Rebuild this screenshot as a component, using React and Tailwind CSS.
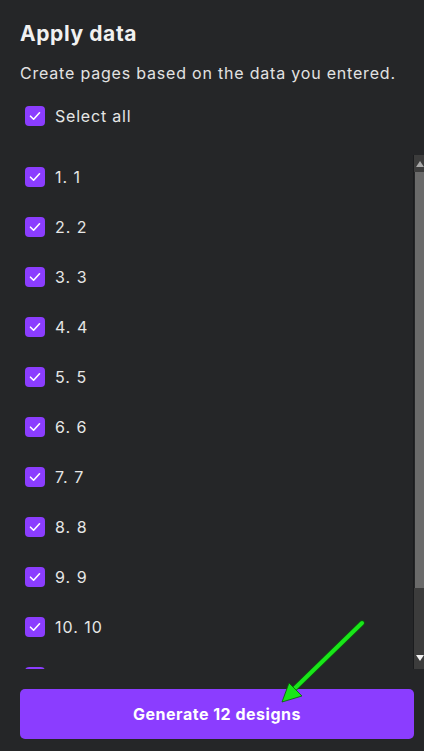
import React from "react";

const Check = () => (
  <div className="w-[20px] h-[20px] rounded-[4px] bg-[#8b3dff] flex items-center justify-center shrink-0">
    <svg width="14" height="14" viewBox="0 0 14 14" fill="none">
      <path d="M2.5 7.2 L5.6 10.2 L11.5 3.8" stroke="white" strokeWidth="1.6" strokeLinecap="round" strokeLinejoin="round" />
    </svg>
  </div>
);

const items = Array.from({ length: 11 }, (_, i) => `${i + 1}. ${i + 1}`);

export default function App() {
  return (
    <div
      className="relative w-[424px] h-[751px] overflow-hidden bg-[#252628] text-[#ececec] flex flex-col"
      style={{ fontFamily: "Inter, 'Noto Sans', sans-serif" }}
    >
      <div className="px-[20px] pt-[20px]">
        <h1 className="text-[21px] leading-[28px] font-bold text-[#f1f1f1] tracking-[0.6px]">Apply data</h1>
        <p className="mt-[13px] text-[16px] leading-[24px] text-[#e2e2e2] tracking-[0.8px] whitespace-nowrap">
          Create pages based on the data you entered.
        </p>
        <div className="mt-[21px] pl-[5px] flex items-center gap-[10px] h-[20px]">
          <Check />
          <span className="text-[16px] leading-[20px] text-[#e6e6e6] tracking-[0.8px]">Select all</span>
        </div>
      </div>

      <div className="mt-[29px] h-[514px] flex pl-[20px]">
        <div className="flex-1 overflow-hidden pl-[5px]">
          {items.map((t) => (
            <div key={t} className="h-[50px] pt-[12px] flex items-start gap-[10px]">
              <Check />
              <span className="text-[16px] leading-[20px] text-[#e6e6e6] tracking-[1px]">{t}</span>
            </div>
          ))}
        </div>
        <div className="w-[11px] flex flex-col border-l border-[#1b1c1e]">
          <div className="h-[17px] bg-[#3c3c3c] flex items-center justify-end">
            <svg width="8" height="6" viewBox="0 0 8 6">
              <path d="M4 0 L8 6 L0 6 Z" fill="#a8a8a8" />
            </svg>
          </div>
          <div className="h-[416px] bg-[#6a6a6a] ml-[1px]" />
          <div className="flex-1 bg-[#3c3c3c] flex flex-col justify-end pb-[8px] items-end">
            <svg width="8" height="6" viewBox="0 0 8 6">
              <path d="M0 0 L8 0 L4 6 Z" fill="#f2f2f2" />
            </svg>
          </div>
        </div>
      </div>

      <div className="px-[20px] mt-[20px]">
        <button className="w-[394px] h-[50px] rounded-[5px] bg-[#8b3dff] text-white text-[16px] font-bold tracking-[0.5px] flex items-center justify-center">
          Generate 12 designs
        </button>
      </div>

      <svg className="absolute left-0 top-0 pointer-events-none" width="424" height="751">
        <line x1="362" y1="623" x2="292" y2="691" stroke="#0a5a0a" strokeWidth="5.5" strokeLinecap="round" />
        <line x1="362" y1="623" x2="292" y2="691" stroke="#19e619" strokeWidth="4" strokeLinecap="round" />
        <path d="M282 702 L289 683 L302 696 Z" fill="#19e619" stroke="#0a5a0a" strokeWidth="0.8" strokeLinejoin="round" />
      </svg>
    </div>
  );
}
